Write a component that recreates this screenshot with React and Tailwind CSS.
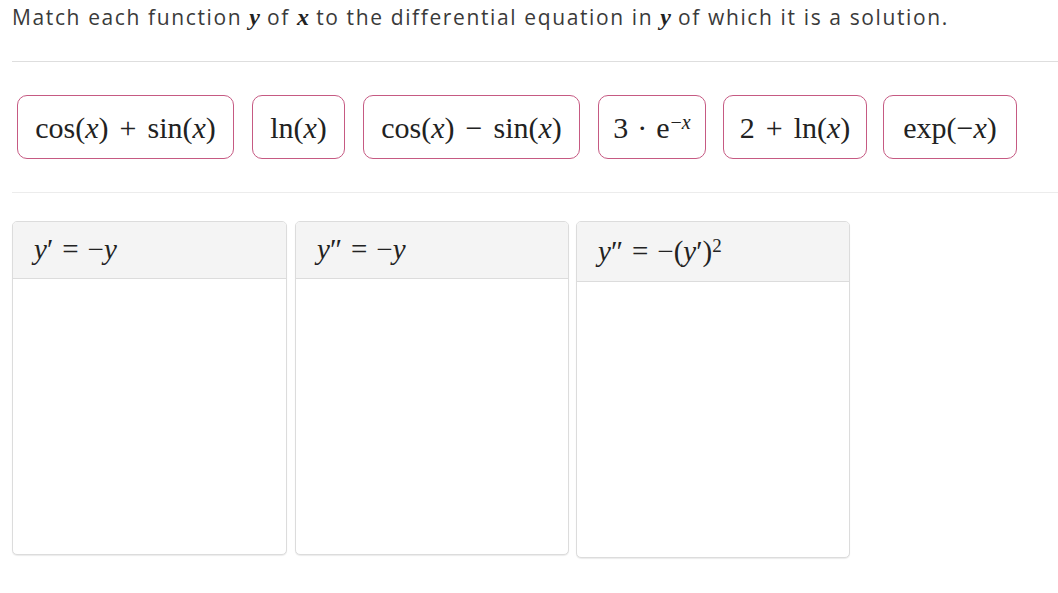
import React from "react";

const serif = { fontFamily: '"Liberation Serif", "DejaVu Serif", serif' };

const V = ({ children }) => <i className="italic">{children}</i>;
const Op = ({ children }) => <span className="mx-[9px]">{children}</span>;
const BOp = ({ children }) => <span className="mx-[11px]">{children}</span>;

const chips = [
    { w: "w-[217px]", c: <>cos(<V>x</V>)<BOp>+</BOp>sin(<V>x</V>)</> },
    { w: "w-[93px] ml-[18px]", c: <>ln(<V>x</V>)</> },
    { w: "w-[217px] ml-[18px]", c: <>cos(<V>x</V>)<BOp>−</BOp>sin(<V>x</V>)</> },
    { w: "w-[108px] ml-[18px]", c: <>3<Op>·</Op>e<sup className="text-[20px] relative -top-[5px] ml-[1px]">−<V>x</V></sup></> },
    { w: "w-[144px] ml-[17px]", c: <>2<BOp>+</BOp>ln(<V>x</V>)</> },
    { w: "w-[134px] ml-[16px]", c: <>exp(−<V>x</V>)</> },
];

const columns = [
    { eq: <><V>y</V>′<Op>=</Op>−<V>y</V></>, tall: false, w: "w-[275px]" },
    { eq: <><V>y</V>″<Op>=</Op>−<V>y</V></>, tall: false, w: "w-[274px] ml-[8px]" },
    { eq: <><V>y</V>″<Op>=</Op>−(<V>y</V>′)<sup className="text-[19px] relative -top-[6px]">2</sup></>, tall: true, w: "w-[274px] ml-[7px]" },
];

const App = () => {
    return (
        <div className="w-[1058px] h-[593px] bg-white pl-3 overflow-hidden">
            <p className="h-[34px] text-[21px] text-[#3a3a3a] leading-[34px] tracking-[1.62px] whitespace-nowrap" style={{ fontFamily: '"Open Sans", "Noto Sans", sans-serif' }}>
                Match each function{" "}
                <span className="italic font-bold text-[24px] text-[#222] tracking-normal" style={serif}>y</span> of{" "}
                <span className="italic font-bold text-[24px] text-[#222] tracking-normal" style={serif}>x</span> to the differential equation in{" "}
                <span className="italic font-bold text-[24px] text-[#222] tracking-normal" style={serif}>y</span> of which it is a solution.
            </p>

            <div className="mt-[27px] border-t border-[#dedede]" />

            <div className="flex pl-[5px] pt-[33px] pb-[33px]">
                {chips.map((c, i) => (
                    <div
                        key={i}
                        className={`${c.w} shrink-0 h-[64px] flex items-center justify-center border border-[#c65a83] rounded-[10px] bg-white text-[30px] text-[#222] whitespace-nowrap`}
                        style={serif}
                    >
                        {c.c}
                    </div>
                ))}
            </div>

            <div className="border-t border-[#ececec]" />

            <div className="flex pt-[28px] items-start">
                {columns.map((col, i) => (
                    <div
                        key={i}
                        className={`${col.w} shrink-0 ${col.tall ? "h-[337px]" : "h-[334px]"} border border-[#dcdcdc] rounded-[5px] bg-white shadow-[0_1px_1px_rgba(0,0,0,0.08)] flex flex-col overflow-hidden`}
                    >
                        <div
                            className={`${col.tall ? "h-[60px]" : "h-[57px]"} bg-[#f4f4f4] border-b border-[#dcdcdc] flex items-center pl-[21px] text-[29px] text-[#222]`}
                            style={serif}
                        >
                            {col.eq}
                        </div>
                        <div className="flex-1" />
                    </div>
                ))}
            </div>
        </div>
    );
};

export default App;
